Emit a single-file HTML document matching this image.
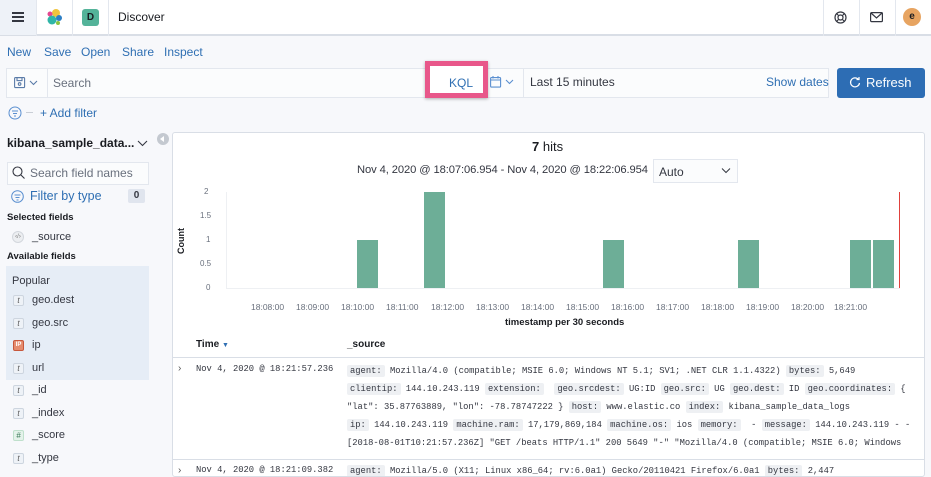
<!DOCTYPE html>
<html><head><meta charset="utf-8"><style>
*{box-sizing:border-box;margin:0;padding:0}
body{width:931px;height:474px;overflow:hidden;background:#f7f8fb;font-family:"Liberation Sans",sans-serif;color:#343741;position:relative;font-size:12px}
.a{position:absolute;white-space:nowrap}
.blue{color:#2f6fb3}
.hdr{left:0;top:0;width:931px;height:36px;background:#fff;border-bottom:2px solid #d9dee6}
.vd{top:0;width:1px;height:36px;background:#e3e7ee}
.mono{font-family:"Liberation Mono",monospace;font-size:8.8px;color:#343741}
.k{background:#eef0f3;padding:1px 3px;border-radius:2px}
.ti{width:11px;height:11px;border:1px solid #cdd5df;background:#eef2f7;border-radius:2px;font-size:8px;font-style:italic;text-align:center;line-height:9px;color:#555}
.fl{font-size:11px;color:#343741}
.xl{font-size:8.5px;color:#69707d;top:302px}
.bar{background:#6dae97;position:absolute}
</style></head><body>
<div class="a hdr"></div>
<div class="a" style="left:0;top:0;width:36px;height:35px;background:#eef2f8"></div>
<div class="a" style="left:12px;top:12px;width:12px;height:2px;background:#343741;box-shadow:0 4px 0 #343741,0 8px 0 #343741"></div>
<div class="a vd" style="left:36px"></div><div class="a vd" style="left:72px"></div><div class="a vd" style="left:108px"></div>
<svg class="a" style="left:45px;top:8px" width="18" height="18"><circle cx="11" cy="5" r="4" fill="#f0c43c"/><circle cx="5" cy="6" r="2.5" fill="#e5468f"/><circle cx="7" cy="12" r="4.5" fill="#2fb5a7"/><circle cx="14" cy="10" r="3" fill="#2c7fc5"/><circle cx="13" cy="15" r="2" fill="#8ac43f"/></svg>
<div class="a" style="left:82px;top:9px;width:17px;height:17px;border-radius:3px;background:#54b399;font-size:10px;font-weight:bold;text-align:center;line-height:17px;color:#1a1c21">D</div>
<div class="a" style="left:118px;top:10px;font-size:12px;color:#1a1c21">Discover</div>
<div class="a vd" style="left:823px"></div><div class="a vd" style="left:859px"></div><div class="a vd" style="left:895px"></div>
<svg class="a" style="left:834px;top:11px" width="13" height="13" fill="none" stroke="#343741" stroke-width="1.2"><circle cx="6.5" cy="6.5" r="5.5"/><circle cx="6.5" cy="6.5" r="2.5"/><path d="M2.5 2.5l2 2M10.5 2.5l-2 2M2.5 10.5l2-2M10.5 10.5l-2-2"/></svg>
<svg class="a" style="left:870px;top:12px" width="13" height="11" fill="none" stroke="#343741" stroke-width="1.2"><rect x=".6" y=".6" width="11.8" height="9" rx="1"/><path d="M1 1l5.5 5 5.5-5"/></svg>
<div class="a" style="left:903px;top:8px;width:18px;height:18px;border-radius:50%;background:#e7a461;font-size:10px;font-weight:bold;text-align:center;line-height:18px;color:#1a1c21">e</div>

<div class="a blue" style="left:7px;top:45px;font-size:12px">New</div>
<div class="a blue" style="left:44px;top:45px;font-size:12px">Save</div>
<div class="a blue" style="left:81px;top:45px;font-size:12px">Open</div>
<div class="a blue" style="left:122px;top:45px;font-size:12px">Share</div>
<div class="a blue" style="left:164px;top:45px;font-size:12px">Inspect</div>

<div class="a" style="left:6px;top:68px;width:823px;height:30px;background:#fbfcfd;border:1px solid #e3e7ee"></div>
<div class="a" style="left:47px;top:68px;width:1px;height:30px;background:#e3e7ee"></div>
<svg class="a" style="left:14px;top:77px" width="26" height="12" fill="none" stroke="#5a7ba8" stroke-width="1.1"><rect x=".6" y=".6" width="10" height="10" rx="1"/><rect x="3" y=".6" width="5" height="3"/><circle cx="5.6" cy="7" r="1.3"/><path d="M16 4l3.5 3.5L23 4"/></svg>
<div class="a" style="left:53px;top:76px;font-size:12px;color:#69707d">Search</div>
<div class="a" style="left:425px;top:61px;width:63px;height:37px;border:5px solid #e8578a;background:#fff;box-shadow:0 1px 3px rgba(0,0,0,.3)"></div>
<div class="a blue" style="left:449px;top:76px;font-size:12px">KQL</div>
<svg class="a" style="left:490px;top:76px" width="28" height="12" fill="none" stroke="#5a8fd0" stroke-width="1.1"><rect x=".6" y="1.6" width="10" height="9.5" rx="1"/><path d="M.6 4h10M3 0v2.5M8 0v2.5M16 4l3.5 3.5L23 4"/></svg>
<div class="a" style="left:523px;top:68px;width:1px;height:30px;background:#e3e7ee"></div>
<div class="a" style="left:530px;top:75px;font-size:12px;color:#343741">Last 15 minutes</div>
<div class="a blue" style="left:766px;top:75px;font-size:12px">Show dates</div>
<div class="a" style="left:837px;top:68px;width:88px;height:30px;background:#2d6db4;border-radius:3px"></div>
<svg class="a" style="left:849px;top:77px" width="12" height="12" fill="none" stroke="#fff" stroke-width="1.2"><path d="M9.5 2.5A4.5 4.5 0 1 0 10.5 6"/><path d="M7.5 2.5h2.5V0"/></svg>
<div class="a" style="left:866px;top:75px;font-size:13px;color:#fff">Refresh</div>

<svg class="a" style="left:8px;top:106px" width="14" height="14" fill="none" stroke="#5a8fd0" stroke-width="1"><circle cx="7" cy="7" r="6"/><path d="M4 5h6M5 7.5h4M6 10h2"/></svg>
<div class="a" style="left:26px;top:112px;width:7px;height:1px;background:#c9ced6"></div>
<div class="a blue" style="left:40px;top:106px;font-size:12px">+ Add filter</div>

<div class="a" style="left:7px;top:136px;font-size:12px;font-weight:bold;color:#1a1c21">kibana_sample_data...</div>
<svg class="a" style="left:137px;top:140px" width="11" height="7" fill="none" stroke="#343741" stroke-width="1.1"><path d="M1 1l4.5 4.5L10 1"/></svg>
<div class="a" style="left:157px;top:133px;width:12px;height:12px;border-radius:50%;background:#c4c9d0"></div>
<div class="a" style="left:160px;top:136px;width:0;height:0;border-top:3px solid transparent;border-bottom:3px solid transparent;border-right:4px solid #fff"></div>
<div class="a" style="left:7px;top:162px;width:142px;height:23px;background:#fbfcfd;border:1px solid #e3e7ee"></div>
<svg class="a" style="left:12px;top:166px" width="13" height="13" fill="none" stroke="#343741" stroke-width="1.1"><circle cx="5.5" cy="5.5" r="4.5"/><path d="M9 9l3.5 3.5"/></svg>
<div class="a" style="left:30px;top:166px;font-size:12px;color:#69707d">Search field names</div>
<svg class="a" style="left:11px;top:190px" width="13" height="13" fill="none" stroke="#5a8fd0" stroke-width="1"><circle cx="6.5" cy="6.5" r="5.8"/><path d="M3.5 5h6M4.5 7.5h4M5.5 10h2"/></svg>
<div class="a blue" style="left:30px;top:189px;font-size:12.5px">Filter by type</div>
<div class="a" style="left:128px;top:189px;width:17px;height:14px;background:#e0e5ee;border-radius:2px;font-size:10px;font-weight:bold;text-align:center;line-height:14px">0</div>
<div class="a" style="left:7px;top:212px;font-size:9.5px;font-weight:bold;color:#1a1c21">Selected fields</div>
<div class="a" style="left:12px;top:231px;width:12px;height:12px;border-radius:50%;background:#eceef1;border:1px solid #d3d7dd;font-size:6px;text-align:center;line-height:10px;color:#777">‹/›</div>
<div class="a fl" style="left:32px;top:231px">_source</div>
<div class="a" style="left:7px;top:251px;font-size:9.5px;font-weight:bold;color:#1a1c21">Available fields</div>
<div class="a" style="left:6px;top:266px;width:143px;height:114px;background:#e6edf6"></div>
<div class="a fl" style="left:12px;top:275px">Popular</div>
<div class="a ti" style="left:13px;top:295px">t</div><div class="a fl" style="left:32px;top:294px">geo.dest</div>
<div class="a ti" style="left:13px;top:318px">t</div><div class="a fl" style="left:32px;top:317px">geo.src</div>
<div class="a ti" style="left:13px;top:340px;background:#e58c6e;border-color:#c7573b;color:#fff;font-style:normal;font-size:6px;font-weight:bold">IP</div><div class="a fl" style="left:32px;top:339px">ip</div>
<div class="a ti" style="left:13px;top:363px">t</div><div class="a fl" style="left:32px;top:362px">url</div>
<div class="a ti" style="left:13px;top:385px">t</div><div class="a fl" style="left:32px;top:384px">_id</div>
<div class="a ti" style="left:13px;top:408px">t</div><div class="a fl" style="left:32px;top:407px">_index</div>
<div class="a ti" style="left:13px;top:430px;background:#e4f2ea;border-color:#bfe0cc;color:#3a7a58">#</div><div class="a fl" style="left:32px;top:429px">_score</div>
<div class="a ti" style="left:13px;top:453px">t</div><div class="a fl" style="left:32px;top:452px">_type</div>

<div class="a" style="left:172px;top:132px;width:753px;height:345px;background:#fff;border:1px solid #d9dee6;border-radius:3px;overflow:hidden">
<div class="a mono" style="left:174px;top:229px;line-height:18px;white-space:pre"><span class="k">agent:</span> Mozilla/4.0 (compatible; MSIE 6.0; Windows NT 5.1; SV1; .NET CLR 1.1.4322) <span class="k">bytes:</span> 5,649
<span class="k">clientip:</span> 144.10.243.119 <span class="k">extension:</span>  <span class="k">geo.srcdest:</span> UG:ID <span class="k">geo.src:</span> UG <span class="k">geo.dest:</span> ID <span class="k">geo.coordinates:</span> {
"lat": 35.87763889, "lon": -78.78747222 } <span class="k">host:</span> www.elastic.co <span class="k">index:</span> kibana_sample_data_logs
<span class="k">ip:</span> 144.10.243.119 <span class="k">machine.ram:</span> 17,179,869,184 <span class="k">machine.os:</span> ios <span class="k">memory:</span>  - <span class="k">message:</span> 144.10.243.119 - -
[2018-08-01T10:21:57.236Z] "GET /beats HTTP/1.1" 200 5649 "-" "Mozilla/4.0 (compatible; MSIE 6.0; Windows</div>
<div class="a mono" style="left:174px;top:333px"><span class="k">agent:</span> Mozilla/5.0 (X11; Linux x86_64; rv:6.0a1) Gecko/20110421 Firefox/6.0a1 <span class="k">bytes:</span> 2,447</div>
</div>
<div class="a" style="left:532px;top:139px;font-size:13px;color:#1a1c21"><b>7</b> hits</div>
<div class="a" style="left:357px;top:164px;font-size:11.2px;color:#343741;letter-spacing:-0.1px">Nov 4, 2020 @ 18:07:06.954 - Nov 4, 2020 @ 18:22:06.954</div>
<div class="a" style="left:653px;top:159px;width:85px;height:24px;background:#fbfcfd;border:1px solid #e3e7ee"></div>
<div class="a" style="left:659px;top:165px;font-size:12px">Auto</div>
<svg class="a" style="left:721px;top:168px" width="10" height="6" fill="none" stroke="#343741" stroke-width="1"><path d="M1 .5l4 4 4-4"/></svg>
<div class="a" style="left:176px;top:254px;transform:rotate(-90deg);transform-origin:left top;font-size:9px;font-weight:bold;color:#1a1c21">Count</div>
<div class="a" style="left:204px;top:187px;font-size:8px;color:#69707d">2</div>
<div class="a" style="left:200px;top:211px;font-size:8px;color:#69707d">1.5</div>
<div class="a" style="left:206px;top:235px;font-size:8px;color:#69707d">1</div>
<div class="a" style="left:200px;top:259px;font-size:8px;color:#69707d">0.5</div>
<div class="a" style="left:206px;top:283px;font-size:8px;color:#69707d">0</div>
<div class="a" style="left:226px;top:192px;width:1px;height:97px;background:#eef0f3"></div>
<div class="a" style="left:226px;top:288px;width:674px;height:1px;background:#eef0f3"></div>
<div class="bar" style="left:357px;top:240px;width:21px;height:48px"></div>
<div class="bar" style="left:424px;top:192px;width:21px;height:96px"></div>
<div class="bar" style="left:603px;top:240px;width:21px;height:48px"></div>
<div class="bar" style="left:738px;top:240px;width:21px;height:48px"></div>
<div class="bar" style="left:850px;top:240px;width:21px;height:48px"></div>
<div class="bar" style="left:873px;top:240px;width:21px;height:48px"></div>
<div class="a" style="left:899px;top:192px;width:1px;height:96px;background:#e0413c"></div>
<div class="a xl" style="left:251px">18:08:00</div><div class="a xl" style="left:296px">18:09:00</div><div class="a xl" style="left:341px">18:10:00</div><div class="a xl" style="left:386px">18:11:00</div><div class="a xl" style="left:431px">18:12:00</div><div class="a xl" style="left:476px">18:13:00</div><div class="a xl" style="left:521px">18:14:00</div><div class="a xl" style="left:566px">18:15:00</div><div class="a xl" style="left:611px">18:16:00</div><div class="a xl" style="left:656px">18:17:00</div><div class="a xl" style="left:701px">18:18:00</div><div class="a xl" style="left:746px">18:19:00</div><div class="a xl" style="left:791px">18:20:00</div><div class="a xl" style="left:834px">18:21:00</div>
<div class="a" style="left:505px;top:317px;font-size:9.5px;font-weight:bold;color:#1a1c21">timestamp per 30 seconds</div>

<div class="a" style="left:196px;top:339px;font-size:10px;font-weight:bold;color:#1a1c21">Time <span style="color:#2f6fb3;font-size:7px">▼</span></div>
<div class="a" style="left:347px;top:339px;font-size:10px;font-weight:bold;color:#1a1c21">_source</div>
<div class="a" style="left:173px;top:357px;width:751px;height:1px;background:#d9dee6"></div>
<div class="a" style="left:178px;top:363px;font-size:10px;color:#555">›</div>
<div class="a mono" style="left:196px;top:364px">Nov 4, 2020 @ 18:21:57.236</div>
<div class="a" style="left:173px;top:459px;width:751px;height:1px;background:#d9dee6"></div>
<div class="a" style="left:178px;top:465px;font-size:10px;color:#555">›</div>
<div class="a mono" style="left:196px;top:465px">Nov 4, 2020 @ 18:21:09.382</div>
</body></html>
